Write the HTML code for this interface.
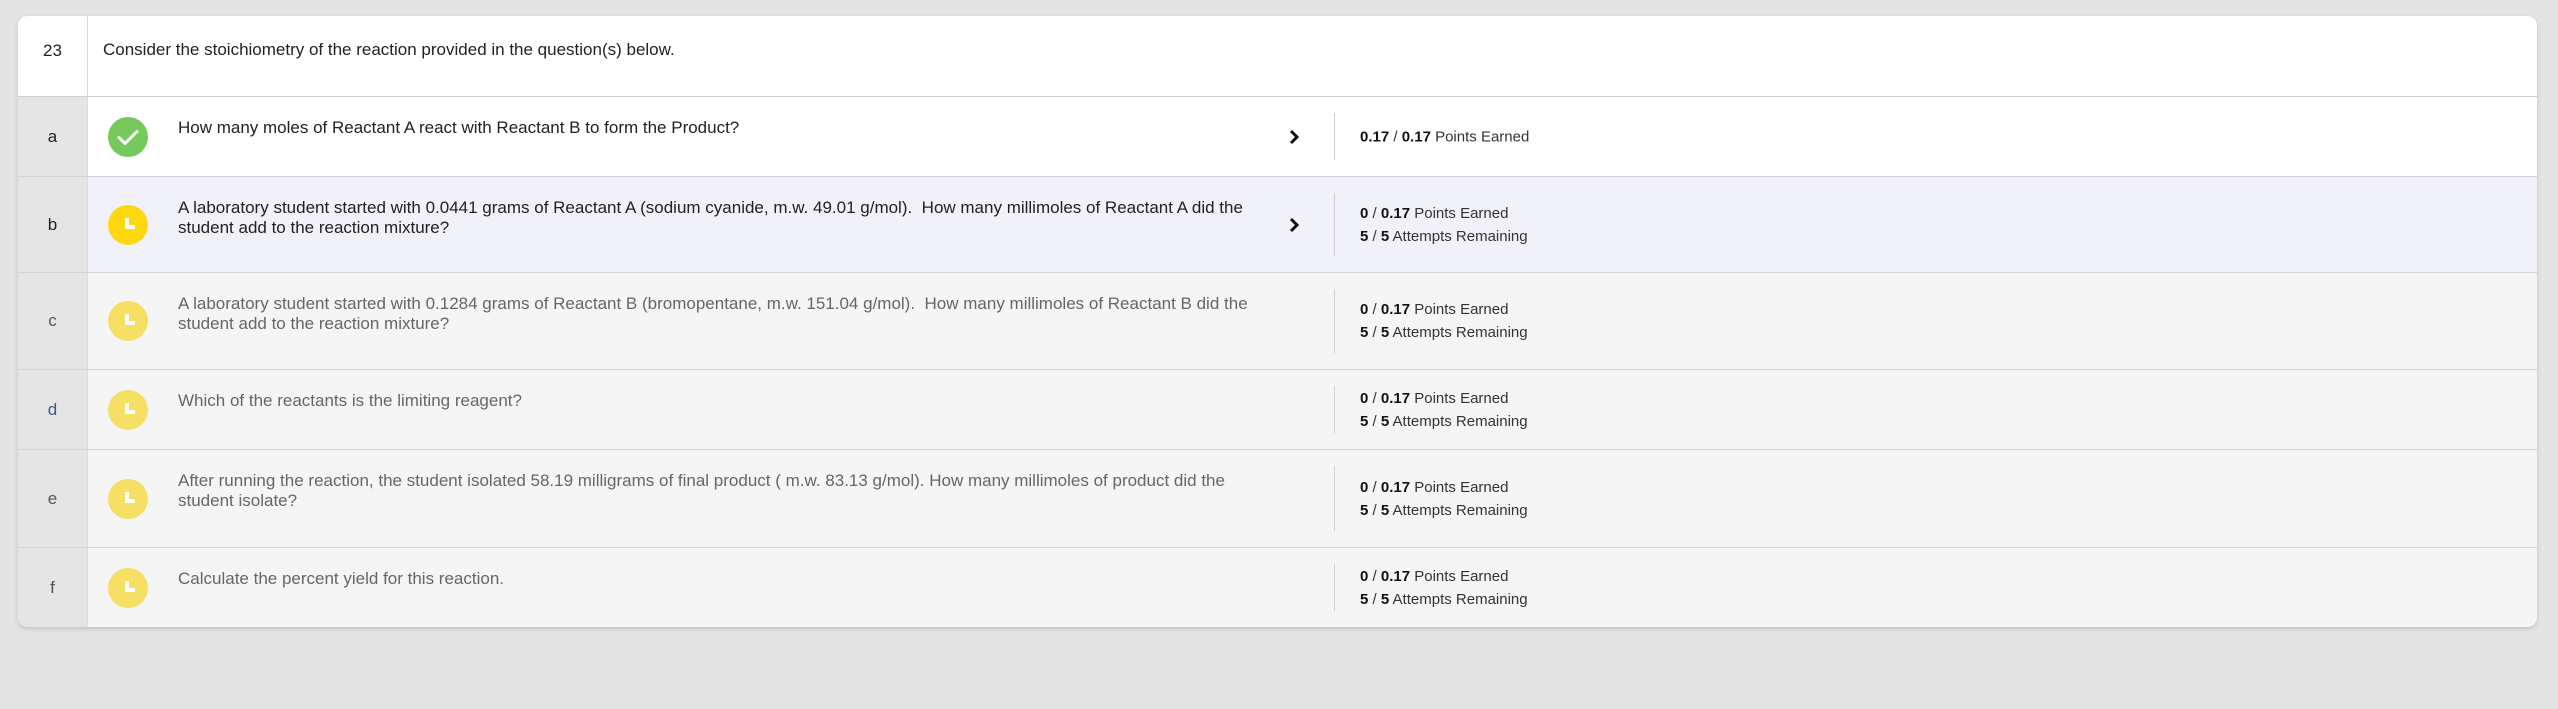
<!DOCTYPE html>
<html><head><meta charset="utf-8"><style>
*{box-sizing:border-box;margin:0;padding:0}
body{width:2558px;height:709px;background:#e4e4e4;font-family:"Liberation Sans",sans-serif;position:relative;overflow:hidden}
.card{position:absolute;left:18px;top:16px;width:2519px;height:611px;background:#fff;border-radius:10px;overflow:hidden;box-shadow:0 2px 5px rgba(0,0,0,.15)}
.hdr{position:absolute;left:0;top:0;width:100%;height:81px;background:#fff;border-bottom:1px solid #d0d0d0}
.hdr .n{position:absolute;left:0;top:0;width:70px;height:80px;border-right:1px solid #ddd;font-size:17px;color:#222;text-align:center;line-height:70px}
.hdr .t{position:absolute;left:85px;top:24px;font-size:17px;color:#222}
.row{position:absolute;left:0;width:100%;border-bottom:1px solid #d4d4d4}
.row .l{position:absolute;left:0;top:0;bottom:0;width:70px;background:#e5e5e5;border-right:1px solid #ddd;font-size:17px;color:#555;display:flex;align-items:center;justify-content:center}
.ic{position:absolute;left:90px;width:40px;height:40px;border-radius:50%;top:50%;margin-top:-20px}
.ic svg{position:absolute;left:0;top:0}
.q{position:absolute;left:160px;top:21px;font-size:17px;line-height:20px;color:#222;white-space:nowrap}
.g .q{color:#666}
.chev{position:absolute;left:1270px;top:50%;margin-top:-9px}
.div{position:absolute;left:1316px;width:1px;background:#d0d0d0;top:16px;bottom:16px}
.pts{position:absolute;left:1342px;top:50%;transform:translateY(-50%);font-size:15px;line-height:23px;color:#333}
.pts b{color:#111}
</style></head><body>
<div class="card">
<div class="hdr"><div class="n">23</div><div class="t">Consider the stoichiometry of the reaction provided in the question(s) below.</div></div>

<div class="row" style="top:81px;height:80px;background:#fff">
<div class="l" style="color:#222">a</div>
<div class="ic" style="background:#76c95d"><svg width="40" height="40"><path d="M11 20.5l6 6 12-12" fill="none" stroke="#fff" stroke-width="3" stroke-linecap="round" stroke-linejoin="round"/></svg></div>
<div class="q">How many moles of Reactant A react with Reactant B to form the Product?</div>
<svg class="chev" width="12" height="18"><path d="M3 3l6 6-6 6" fill="none" stroke="#111" stroke-width="3"/></svg>
<div class="div"></div>
<div class="pts"><b>0.17</b> / <b>0.17</b> Points Earned</div>
</div>

<div class="row" style="top:161px;height:96px;background:#f0f1f9">
<div class="l" style="color:#222">b</div>
<div class="ic" style="background:#ffd70f"><svg width="40" height="40"><path d="M19 13v9h8" fill="none" stroke="#fff" stroke-width="4"/></svg></div>
<div class="q">A laboratory student started with 0.0441 grams of Reactant A (sodium cyanide, m.w. 49.01 g/mol).&nbsp; How many millimoles of Reactant A did the<br>student add to the reaction mixture?</div>
<svg class="chev" width="12" height="18"><path d="M3 3l6 6-6 6" fill="none" stroke="#111" stroke-width="3"/></svg>
<div class="div"></div>
<div class="pts"><b>0</b> / <b>0.17</b> Points Earned<br><b>5</b> / <b>5</b> Attempts Remaining</div>
</div>

<div class="row g" style="top:257px;height:97px;background:#f5f5f5">
<div class="l">c</div>
<div class="ic" style="background:#f5e063"><svg width="40" height="40"><path d="M19 13v9h8" fill="none" stroke="#fff" stroke-width="4"/></svg></div>
<div class="q">A laboratory student started with 0.1284 grams of Reactant B (bromopentane, m.w. 151.04 g/mol).&nbsp; How many millimoles of Reactant B did the<br>student add to the reaction mixture?</div>
<div class="div"></div>
<div class="pts"><b>0</b> / <b>0.17</b> Points Earned<br><b>5</b> / <b>5</b> Attempts Remaining</div>
</div>

<div class="row g" style="top:354px;height:80px;background:#f5f5f5">
<div class="l" style="color:#3d5a80">d</div>
<div class="ic" style="background:#f5e063"><svg width="40" height="40"><path d="M19 13v9h8" fill="none" stroke="#fff" stroke-width="4"/></svg></div>
<div class="q">Which of the reactants is the limiting reagent?</div>
<div class="div"></div>
<div class="pts"><b>0</b> / <b>0.17</b> Points Earned<br><b>5</b> / <b>5</b> Attempts Remaining</div>
</div>

<div class="row g" style="top:434px;height:98px;background:#f5f5f5">
<div class="l">e</div>
<div class="ic" style="background:#f5e063"><svg width="40" height="40"><path d="M19 13v9h8" fill="none" stroke="#fff" stroke-width="4"/></svg></div>
<div class="q">After running the reaction, the student isolated 58.19 milligrams of final product ( m.w. 83.13 g/mol). How many millimoles of product did the<br>student isolate?</div>
<div class="div"></div>
<div class="pts"><b>0</b> / <b>0.17</b> Points Earned<br><b>5</b> / <b>5</b> Attempts Remaining</div>
</div>

<div class="row g" style="top:532px;height:79px;background:#f5f5f5;border-bottom:none">
<div class="l">f</div>
<div class="ic" style="background:#f5e063"><svg width="40" height="40"><path d="M19 13v9h8" fill="none" stroke="#fff" stroke-width="4"/></svg></div>
<div class="q">Calculate the percent yield for this reaction.</div>
<div class="div"></div>
<div class="pts"><b>0</b> / <b>0.17</b> Points Earned<br><b>5</b> / <b>5</b> Attempts Remaining</div>
</div>
</div>
</body></html>
